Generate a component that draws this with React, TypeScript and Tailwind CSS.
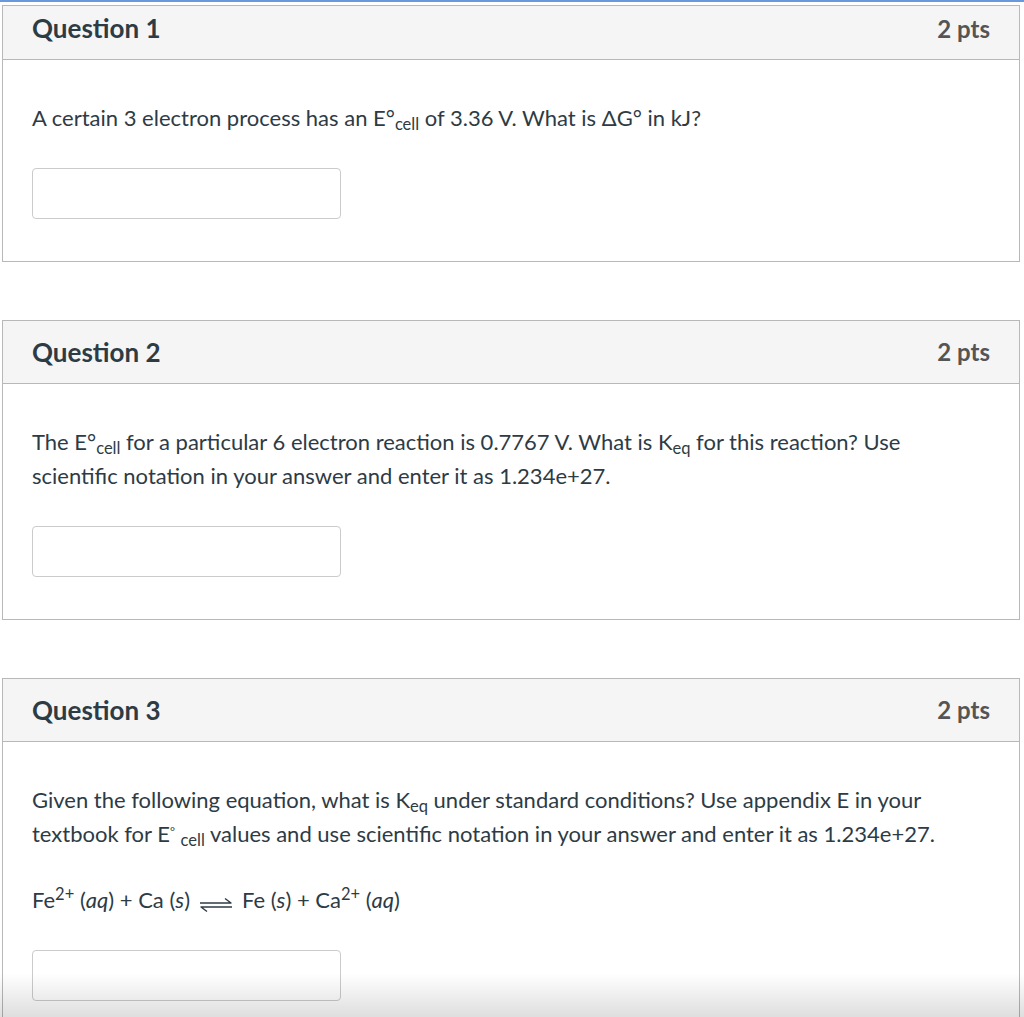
import React from 'react';

const font = { fontFamily: 'Lato, "Open Sans", sans-serif' };

const Harpoons = () => (
  <svg width="36" height="16" viewBox="0 0 36 16" className="inline-block mx-[8px] align-[-5px]">
    <path d="M2 6 H33 L27 1.5" fill="none" stroke="#2d3b45" strokeWidth="1.4" strokeLinejoin="round" />
    <path d="M34 10 H3 L9 14.5" fill="none" stroke="#2d3b45" strokeWidth="1.4" strokeLinejoin="round" />
  </svg>
);

const AnswerBox = () => (
  <div className="w-[309px] h-[51px] border border-[#cbcbcb] rounded-[4px] bg-white" />
);

const Card = ({
  title,
  first,
  children,
}: {
  title: string;
  first?: boolean;
  children: React.ReactNode;
}) => (
  <div className="border border-[#b8b8b8] bg-white">
    <div
      className={
        'flex items-center justify-between bg-[#f5f5f5] border-b border-[#b8b8b8] pl-[29px] pr-[29px] ' +
        (first ? 'h-[54px] pb-[8px]' : 'h-[63px]')
      }
    >
      <span className="text-[26px] font-bold text-[#2d3b45]">{title}</span>
      <span className="text-[24px] font-bold text-[#555555]">2 pts</span>
    </div>
    <div className="pl-[29px] pr-[29px] pt-[41px] pb-[42px] text-[22px] leading-[34px] text-[#2d3b45]">
      {children}
    </div>
  </div>
);

export default function App() {
  return (
    <div className="relative h-[1017px] overflow-hidden bg-white" style={font}>
      <div className="h-[2px] bg-[#6a98dc]" />
      <div className="flex flex-col gap-[58px] pl-[2px] pr-[4px] pt-[3px]">
        <Card title="Question 1" first>
          <p>
            A certain 3 electron process has an E°<sub>cell</sub> of 3.36 V. What is ΔG° in kJ?
          </p>
          <div className="mt-[33px]">
            <AnswerBox />
          </div>
        </Card>

        <Card title="Question 2">
          <p>
            The E°<sub>cell</sub> for a particular 6 electron reaction is 0.7767 V. What is K<sub>eq</sub> for
            this reaction? Use scientific notation in your answer and enter it as 1.234e+27.
          </p>
          <div className="mt-[33px]">
            <AnswerBox />
          </div>
        </Card>

        <Card title="Question 3">
          <p>
            Given the following equation, what is K<sub>eq</sub> under standard conditions? Use appendix E in
            your textbook for E<sup className="text-[12px]">°</sup> <sub>cell</sub> values and use scientific
            notation in your answer and enter it as 1.234e+27.
          </p>
          <p className="mt-[32px]">
            Fe<sup>2+</sup> (<i>aq</i>) + Ca (<i>s</i>)
            <Harpoons />
            Fe (<i>s</i>) + Ca<sup>2+</sup> (<i>aq</i>)
          </p>
          <div className="mt-[33px]">
            <AnswerBox />
          </div>
          <div className="h-[80px]" />
        </Card>
      </div>
      <div className="pointer-events-none absolute bottom-0 left-0 right-0 h-[44px] bg-gradient-to-b from-[rgba(0,0,0,0)] to-[rgba(0,0,0,0.13)]" />
    </div>
  );
}
